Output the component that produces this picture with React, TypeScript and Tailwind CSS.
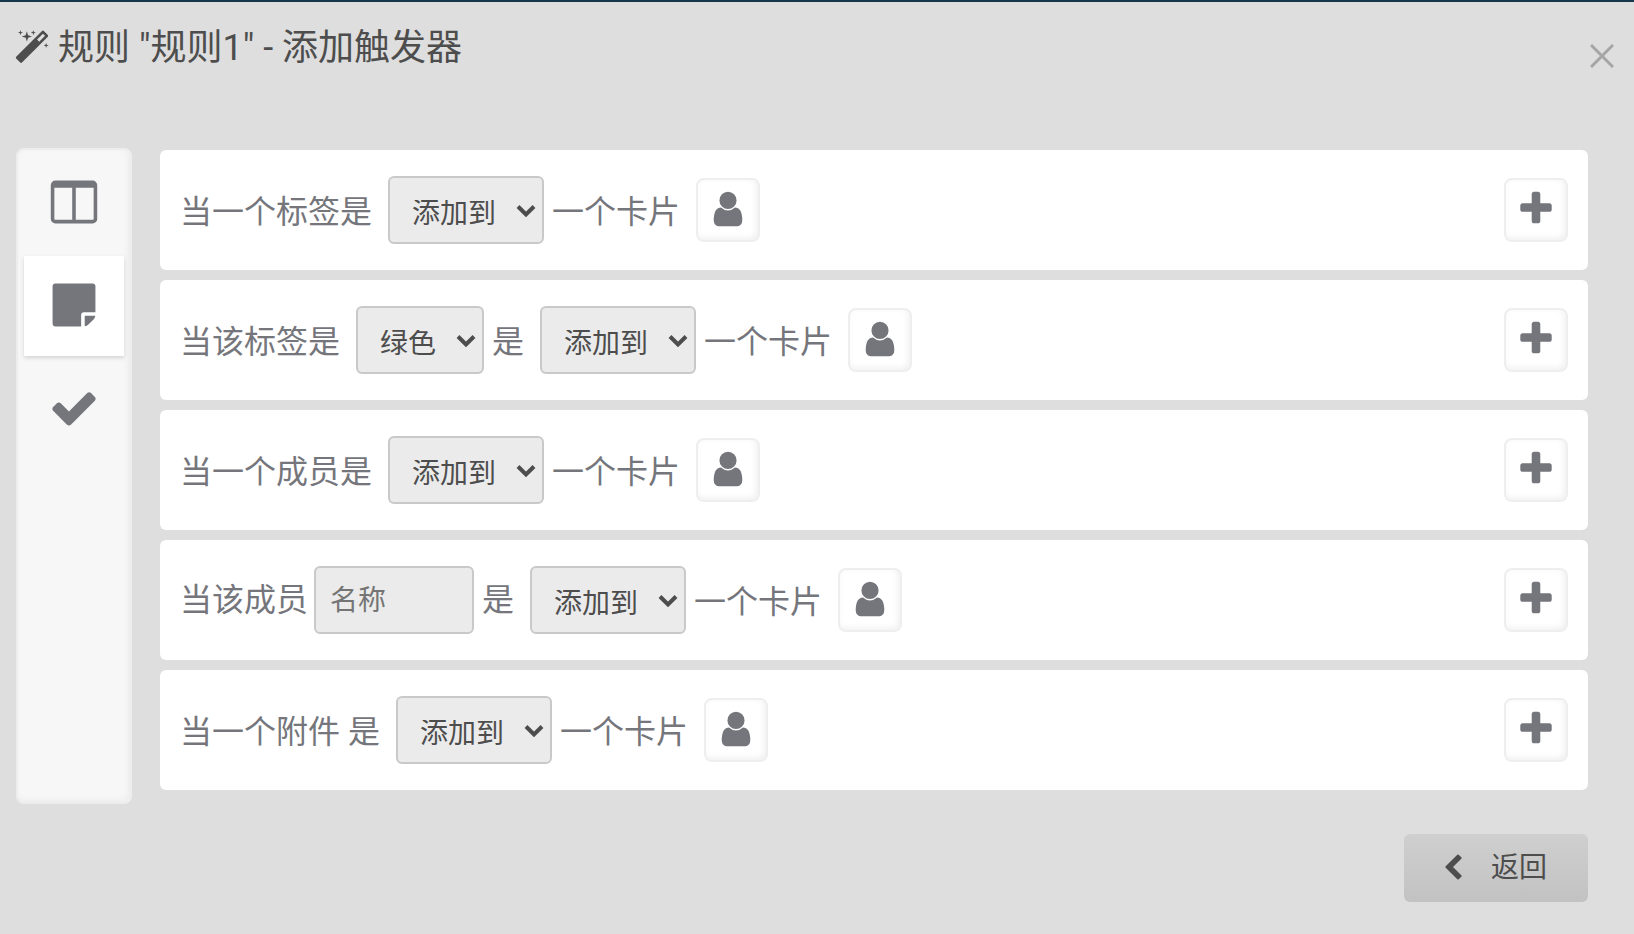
import React from 'react';

interface IconProps {
  className?: string;
}

const MagicIcon = ({ className }: IconProps) => (
  <svg viewBox="0 0 1792 1792" fill="currentColor" className={className} aria-hidden="true">
    <path d="M1254 581l293-293-107-107-293 293zm447-293q0 27-18 45l-1286 1286q-18 18-45 18t-45-18l-198-198q-18-18-18-45t18-45l1286-1286q18-18 45-18t45 18l198 198q18 18 18 45zm-1351-190l98 30-98 30-30 98-30-98-98-30 98-30 30-98zm350 162l196 60-196 60-60 196-60-196-196-60 196-60 60-196zm930 478l98 30-98 30-30 98-30-98-98-30 98-30 30-98zm-640-640l98 30-98 30-30 98-30-98-98-30 98-30 30-98z" />
  </svg>
);

const ColumnsIcon = ({ className }: IconProps) => (
  <svg viewBox="0 0 1792 1792" fill="currentColor" className={className} aria-hidden="true">
    <path d="M224 1536h608v-1152h-640v1120q0 13 9.5 22.5t22.5 9.5zm1376-32v-1120h-640v1152h608q13 0 22.5-9.5t9.5-22.5zm128-1216v1216q0 66-47 113t-113 47h-1344q-66 0-113-47t-47-113v-1216q0-66 47-113t113-47h1344q66 0 113 47t47 113z" />
  </svg>
);

const NoteIcon = ({ className }: IconProps) => (
  <svg viewBox="0 0 1792 1792" fill="currentColor" className={className} aria-hidden="true">
    <path d="M1152 1248v416h-928q-40 0-68-28t-28-68v-1344q0-40 28-68t68-28h1344q40 0 68 28t28 68v928h-416q-40 0-68 28t-28 68zm128 32h381q-15 82-65 132l-184 184q-50 50-132 65z" />
  </svg>
);

const CheckIcon = ({ className }: IconProps) => (
  <svg viewBox="0 0 1792 1792" fill="currentColor" className={className} aria-hidden="true">
    <path d="M1671 566q0 40-28 68l-724 724-136 136q-28 28-68 28t-68-28l-136-136-362-362q-28-28-28-68t28-68l136-136q28-28 68-28t68 28l294 295 656-657q28-28 68-28t68 28l136 136q28 28 28 68z" />
  </svg>
);

const UserIcon = ({ className }: IconProps) => (
  <svg viewBox="0 0 1792 1792" fill="currentColor" className={className} aria-hidden="true">
    <path d="M1536 1399q0 109-62.5 187t-150.5 78h-854q-88 0-150.5-78t-62.5-187q0-85 8.5-160.5t31.5-152 58.5-131 94-89 134.5-34.5q131 128 313 128t313-128q76 0 134.5 34.5t94 89 58.5 131 31.5 152 8.5 160.5zm-256-887q0 159-112.5 271.5t-271.5 112.5-271.5-112.5-112.5-271.5 112.5-271.5 271.5-112.5 271.5 112.5 112.5 271.5z" />
  </svg>
);

const PlusIcon = ({ className }: IconProps) => (
  <svg viewBox="0 0 1792 1792" fill="currentColor" className={className} aria-hidden="true">
    <path d="M1600 736v192q0 40-28 68t-68 28h-416v416q0 40-28 68t-68 28h-192q-40 0-68-28t-28-68v-416h-416q-40 0-68-28t-28-68v-192q0-40 28-68t68-28h416v-416q0-40 28-68t68-28h192q40 0 68 28t28 68v416h416q40 0 68 28t28 68z" />
  </svg>
);

const ChevronLeftIcon = ({ className }: IconProps) => (
  <svg viewBox="0 0 1792 1792" fill="currentColor" className={className} aria-hidden="true">
    <path d="M1427 301l-531 531 531 531q19 19 19 45t-19 45l-166 166q-19 19-45 19t-45-19l-742-742q-19-19-19-45t19-45l742-742q19-19 45-19t45 19l166 166q19 19 19 45t-19 45z" />
  </svg>
);

const CloseIcon = ({ className }: IconProps) => (
  <svg viewBox="0 0 24 24" fill="none" stroke="currentColor" strokeWidth="3" className={className} aria-hidden="true">
    <path d="M1 1l22 22M23 1l-22 22" />
  </svg>
);

interface SelectProps {
  label: string;
  options: string[];
}

const Select: React.FC<SelectProps> = ({ label, options }) => (
  <span className="relative ml-2 block">
    <select
      aria-label={label}
      className="block h-[68px] appearance-none rounded-md border-2 border-[#c9c9c9] bg-[#ebebeb] pt-2 pl-[22px] pr-[45px] text-[28px] leading-none text-[#4d4d4d]"
    >
      {options.map(option => <option key={option}>{option}</option>)}
    </select>
    <svg viewBox="0 0 20 14" fill="none" stroke="currentColor" strokeWidth="4" className="pointer-events-none absolute right-2 top-7 h-3.5 w-5 text-[#4d4d4d]" aria-hidden="true">
      <path d="M2 2.5l8 8 8-8" />
    </svg>
  </span>
);

const SquareButton: React.FC<{ label: string; className?: string; children: React.ReactNode }> = ({ label, className = '', children }) => (
  <button
    aria-label={label}
    className={`flex size-16 shrink-0 items-start justify-center rounded-lg border-2 border-[#eeeeee] bg-white pt-[9px] shadow-[inset_-2px_-2px_6px_#f0f0f0] ${className}`}
  >
    {children}
  </button>
);

const ACTIONS = ['添加到', '移除自'];
const COLORS = ['绿色', '黄色', '橙色', '红色'];

const ActionSelect = () => <Select label="动作" options={ACTIONS} />;

const Text: React.FC<{ children: React.ReactNode }> = ({ children }) => <span className="pt-[3px]">{children}</span>;

const TriggerRow: React.FC<{ children: React.ReactNode }> = ({ children }) => (
  <li className="flex h-[120px] items-center justify-between rounded-md bg-white px-5">
    <div className="flex items-center gap-2">
      {children}
      <Text>一个卡片</Text>
      <SquareButton label="指定用户" className="ml-2">
        <UserIcon className="size-10" />
      </SquareButton>
    </div>
    <SquareButton label="添加触发器">
      <PlusIcon className="size-10" />
    </SquareButton>
  </li>
);

const TABS = [
  { id: 'board', label: '看板', icon: ColumnsIcon },
  { id: 'card', label: '卡片', icon: NoteIcon },
  { id: 'checklist', label: '清单', icon: CheckIcon },
];

const App: React.FC = () => {
  const [activeTab, setActiveTab] = React.useState('card');

  return (
    <div className="min-h-screen border-t-2 border-[#17374d] bg-[#dedede] pb-6 font-['Roboto','Noto_Sans_CJK_SC',sans-serif] text-[#4d4d4d]">
      <header className="flex items-start justify-between pl-3.5 pr-5 pt-5">
        <h2 className="flex items-center gap-2 text-[36px] leading-[52px]">
          <MagicIcon className="size-9" />
          规则 "规则1" - 添加触发器
        </h2>
        <button aria-label="关闭" className="mt-[22px] text-[#a6a6a6]">
          <CloseIcon className="size-6" />
        </button>
      </header>

      <main className="mt-[74px] flex items-start gap-7 pl-4 pr-[46px] text-[#75767c]">
        <nav className="flex h-[656px] w-[116px] shrink-0 flex-col gap-[3px] rounded-lg border-2 border-[#ededed] bg-[#f7f7f7] px-1.5 py-[3px] shadow-[inset_-2px_-2px_6px_#ececec]">
          {TABS.map(({ id, label, icon: Icon }) => (
            <button
              key={id}
              aria-label={label}
              onClick={() => setActiveTab(id)}
              className={`flex size-[100px] items-center justify-center pb-0.5 ${activeTab === id ? 'bg-white shadow-[0_2px_4px_#d4d4d4]' : ''}`}
            >
              <Icon className="size-[50px]" />
            </button>
          ))}
        </nav>

        <div className="mt-0.5 flex-1">
          <ul className="flex flex-col gap-2.5 text-[32px] leading-10">
            <TriggerRow>
              <Text>当一个标签是</Text>
              <ActionSelect />
            </TriggerRow>
            <TriggerRow>
              <Text>当该标签是</Text>
              <Select label="标签" options={COLORS} />
              <Text>是</Text>
              <ActionSelect />
            </TriggerRow>
            <TriggerRow>
              <Text>当一个成员是</Text>
              <ActionSelect />
            </TriggerRow>
            <TriggerRow>
              <label htmlFor="member" className="flex items-center gap-1.5">
                当该成员
                <input
                  id="member"
                  type="text"
                  placeholder="名称"
                  className="h-[68px] w-40 rounded-md border-2 border-[#c9c9c9] bg-[#ebebeb] px-3.5 text-[28px] placeholder:text-[#757575]"
                />
              </label>
              <span>是</span>
              <ActionSelect />
            </TriggerRow>
            <TriggerRow>
              <Text>当一个附件 是</Text>
              <ActionSelect />
            </TriggerRow>
          </ul>

          <div className="mt-11 flex justify-end">
            <button className="flex h-[68px] w-[184px] items-center justify-end gap-6 rounded-md bg-linear-to-b from-[#cfcfcf] to-[#c2c2c2] pr-[41px] text-[28px] text-[#4d4d4d]">
              <ChevronLeftIcon className="size-7" />
              返回
            </button>
          </div>
        </div>
      </main>
    </div>
  );
};

export default App;
